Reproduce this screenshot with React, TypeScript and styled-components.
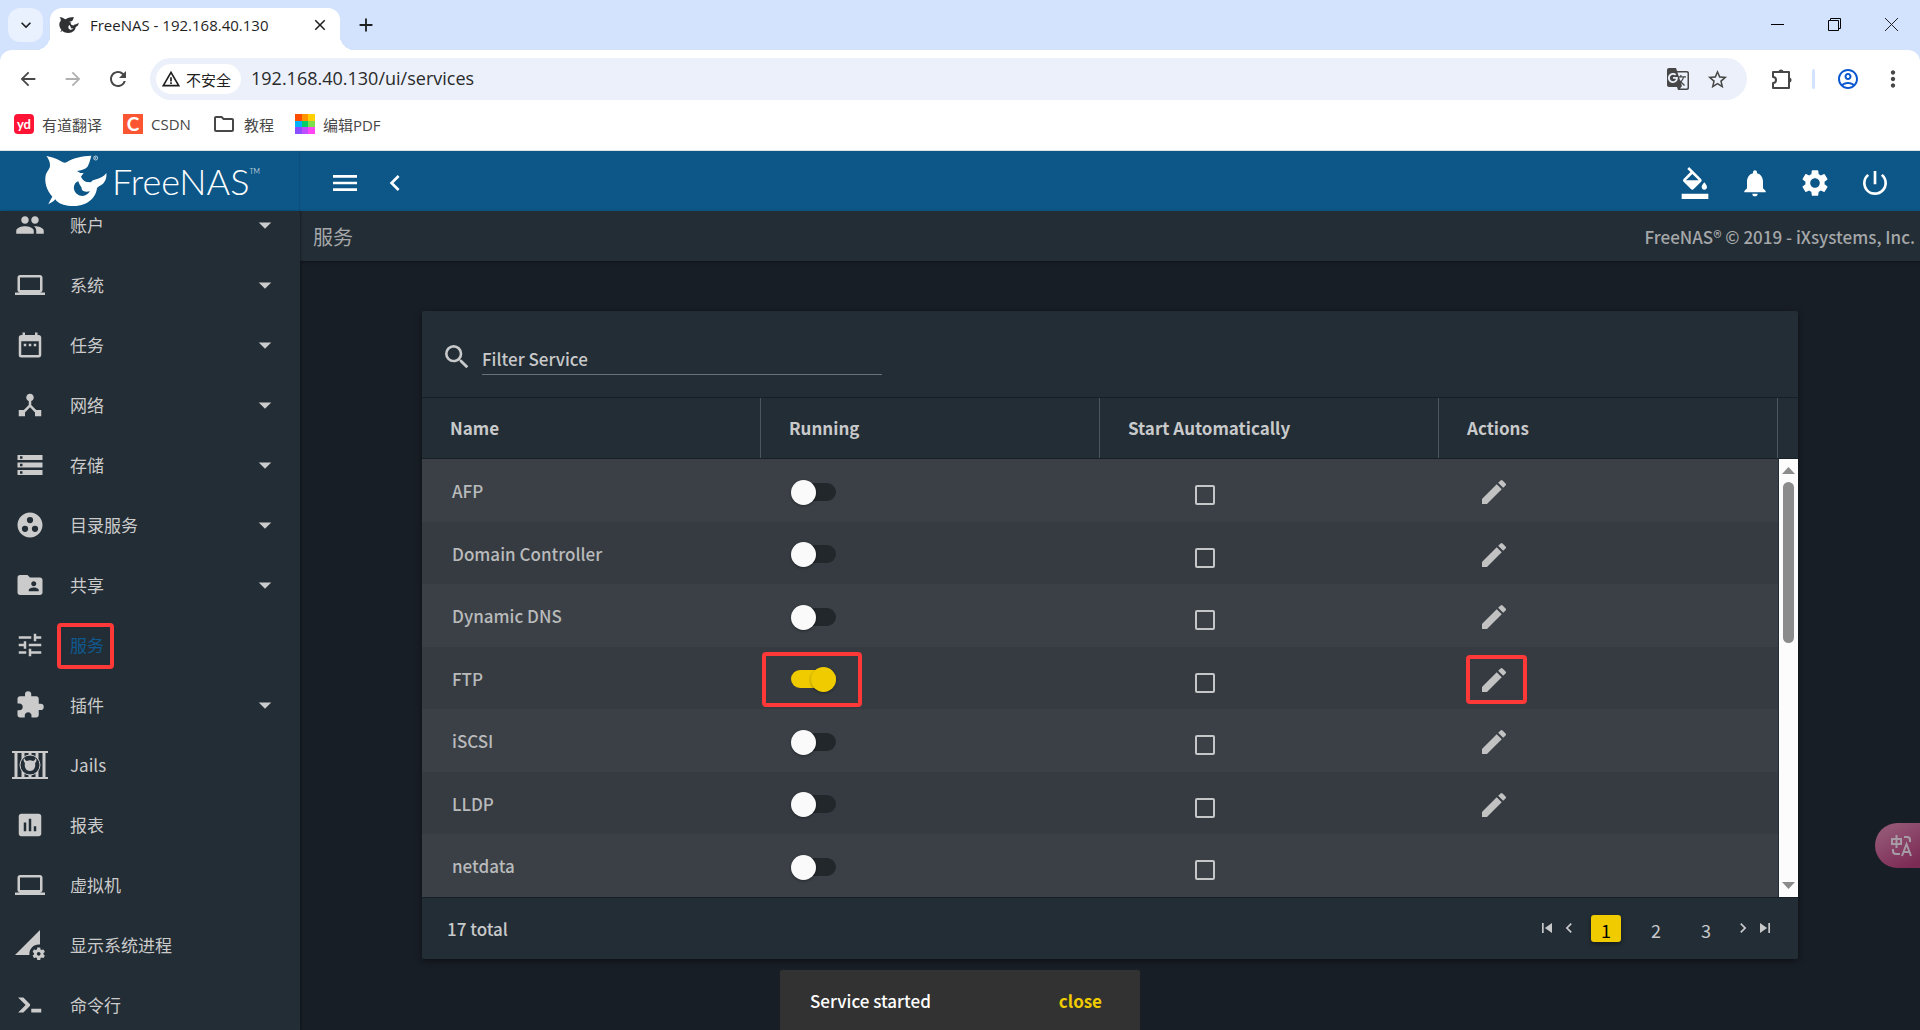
import React from "react";
import styled, { createGlobalStyle } from "styled-components";
import {
  MdAdd,
  MdArrowBack,
  MdArrowDropDown,
  MdArrowForward,
  MdAssessment,
  MdChevronLeft,
  MdChevronRight,
  MdClose,
  MdDateRange,
  MdDeviceHub,
  MdEdit,
  MdExpandMore,
  MdExtension,
  MdFolderShared,
  MdFormatColorFill,
  MdGTranslate,
  MdGroupWork,
  MdLaptop,
  MdMenu,
  MdMoreVert,
  MdNotifications,
  MdOutlineAccountCircle,
  MdOutlineFolder,
  MdPeople,
  MdPermDataSetting,
  MdPowerSettingsNew,
  MdRefresh,
  MdSearch,
  MdSettings,
  MdSkipNext,
  MdSkipPrevious,
  MdStarBorder,
  MdStorage,
  MdTune,
  MdWarningAmber,
} from "react-icons/md";

const appFont = `"Noto Sans CJK SC", "Noto Sans", sans-serif`;
const chromeFont = `"Open Sans", "Noto Sans CJK SC", sans-serif`;

const color = {
  panel: "#232d35",
  page: "#181e26",
  primary: "#0d5788",
  accent: "#f0cb00",
  text: "#c8c9ca",
  line: "#182027",
  mark: "#ff3838",
};

const GlobalStyle = createGlobalStyle`
  *, *::before, *::after { box-sizing: border-box; }
  body { margin: 0; overflow: hidden; background: ${color.page}; }
  button, input { font: inherit; color: inherit; }
  button { padding: 0; border: 0; background: none; cursor: pointer; }
  a { color: inherit; text-decoration: none; }
`;

const Page = styled.div`
  display: flex;
  flex-direction: column;
  height: 100vh;
  font-family: ${appFont};
`;

/* ---------- browser window ---------- */

const Chrome = styled.header`
  flex: none;
  background: #d3e2fd;
  border-bottom: 1px solid #dfe3e3;
  color: #1f1f1f;
  font-family: ${chromeFont};
`;

const TabStrip = styled.div`
  display: flex;
  height: 50px;
  padding: 8px 0 0 8px;
`;

const TabSearch = styled.button`
  display: grid;
  place-items: center;
  width: 35px;
  height: 34px;
  margin-right: 7px;
  border-radius: 12px;
  background: #e9f0fe;
`;

const Tab = styled.div`
  position: relative;
  display: flex;
  align-items: center;
  width: 290px;
  padding: 0 11px 8px 9px;
  border-radius: 12px 12px 0 0;
  background: #fff;
  font-size: 15px;
  line-height: 20px;

  &::before,
  &::after {
    content: "";
    position: absolute;
    bottom: 0;
    width: 14px;
    height: 14px;
  }
  &::before {
    right: 100%;
    background: radial-gradient(circle at 0 0, transparent 14px, #fff 14px);
  }
  &::after {
    left: 100%;
    background: radial-gradient(circle at 100% 0, transparent 14px, #fff 14px);
  }
`;

const TabTitle = styled.span`
  flex: 1;
  margin-left: 11px;
  white-space: nowrap;
`;

const PlainButton = styled.button`
  display: grid;
  place-items: center;
`;

const NewTab = styled(PlainButton)`
  width: 34px;
  height: 34px;
  margin-left: 9px;
`;

const WindowControls = styled.div`
  display: flex;
  margin: -8px 0 0 auto;
`;

const WindowButton = styled(PlainButton)`
  width: 57px;
  height: 48px;
`;

const Toolbar = styled.div`
  display: flex;
  align-items: center;
  height: 50px;
  padding: 8px 5px 0;
  border-radius: 12px 12px 0 0;
  background: #fff;
`;

const ToolButton = styled(PlainButton)<{ $tone?: string }>`
  width: 45px;
  height: 42px;
  color: ${(p) => p.$tone ?? "#474747"};
`;

const Omnibox = styled.div`
  display: flex;
  flex: 1;
  align-items: center;
  height: 42px;
  margin: 0 12px 0 10px;
  padding: 0 18px 0 6px;
  border-radius: 21px;
  background: #ebf0fa;
  color: #474747;
`;

const SecurityChip = styled.button`
  display: flex;
  align-items: center;
  gap: 5px;
  height: 30px;
  padding: 0 10px 0 5px;
  border-radius: 15px;
  background: #fff;
  color: #1f1f1f;
  font-size: 15px;
`;

const AddressInput = styled.input`
  flex: 1;
  min-width: 0;
  margin-left: 10px;
  padding: 0 0 2px;
  border: 0;
  outline: 0;
  background: none;
  color: #2a2a2a;
  font-size: 18px;
`;

const OmniboxActions = styled.div`
  display: flex;
  gap: 16px;
`;

const Divider = styled.span`
  width: 3px;
  height: 20px;
  margin: 0 10px 0 8px;
  border-radius: 2px;
  background: #d3e3fd;
`;

const Bookmarks = styled.nav`
  display: flex;
  align-items: center;
  gap: 21px;
  height: 50px;
  padding: 0 14px 2px;
  background: #fff;
  color: #474747;
  font-size: 15px;
`;

const Bookmark = styled.a`
  display: flex;
  align-items: center;
  gap: 8px;
  white-space: nowrap;
`;

const Badge = styled.span<{ $bg: string; $radius: number; $size: number }>`
  display: grid;
  place-items: center;
  width: 20px;
  height: 20px;
  border-radius: ${(p) => p.$radius}px;
  background: ${(p) => p.$bg};
  color: #fff;
  font: 700 ${(p) => p.$size}px/18px Lato, sans-serif;
`;

/* ---------- application ---------- */

const TopBar = styled.header`
  display: flex;
  flex: none;
  height: 60px;
  background: ${color.primary};
  color: #fff;
`;

const Brand = styled.a`
  display: flex;
  align-items: center;
  gap: 1px;
  width: 300px;
  padding-left: 41px;
  border-right: 1px solid #0b4f7c;
`;

const WordMark = styled.span`
  display: flex;
  align-items: flex-start;
  font: 300 36px/60px Lato, sans-serif;

  sup {
    margin-top: 15px;
    font-size: 7px;
    line-height: 10px;
  }
`;

const TopBarGroup = styled.div<{ $end?: boolean }>`
  display: flex;
  align-items: center;
  margin-left: ${(p) => (p.$end ? "auto" : "20px")};
  padding-right: ${(p) => (p.$end ? "15px" : "0")};
`;

const TopBarButton = styled(PlainButton)<{ $width?: number }>`
  width: ${(p) => p.$width ?? 60}px;
  height: 60px;
  padding-top: 4px;
`;

const Body = styled.div`
  display: flex;
  flex: 1;
  min-height: 0;
`;

const Sidebar = styled.nav`
  flex: none;
  width: 300px;
  overflow: hidden;
  background: ${color.panel};
  box-shadow: 1px 0 2px rgba(0, 0, 0, 0.35);
  color: #cbcbcb;
  z-index: 1;
`;

/* The menu is scrolled slightly past its first entry. */
const NavList = styled.ul`
  margin: -16px 0 0;
  padding: 0;
  list-style: none;
`;

const NavItem = styled.a`
  display: flex;
  align-items: center;
  width: 100%;
  height: 60px;
  padding: 0 20px 0 12px;
  cursor: pointer;
`;

const NavIcon = styled.span`
  display: grid;
  place-items: center;
  width: 36px;
  margin-right: 22px;
`;

const NavLabel = styled.span<{ $active?: boolean }>`
  position: relative;
  margin-right: auto;
  color: ${(p) => (p.$active ? "#0f598f" : "inherit")};
  font-size: 17px;
  line-height: 24px;
`;

const Highlight = styled.span<{ $inset: string }>`
  position: absolute;
  inset: ${(p) => p.$inset};
  border: 4px solid ${color.mark};
  border-radius: 4px;
  pointer-events: none;
`;

const Main = styled.main`
  display: flex;
  flex: 1;
  flex-direction: column;
  min-width: 0;
`;

const Breadcrumb = styled.div`
  display: flex;
  align-items: center;
  justify-content: space-between;
  height: 50px;
  padding: 0 5px 0 13px;
  background: ${color.panel};
  box-shadow: 0 1px 3px rgba(0, 0, 0, 0.4);
  color: #a5a7a9;
  font-size: 17px;
  font-weight: 500;
`;

const Crumb = styled.h1`
  margin: 0;
  font-size: 20px;
  font-weight: 400;
`;

const Card = styled.section`
  margin: 50px 122px 0;
  border-radius: 2px;
  background: ${color.panel};
  box-shadow: 0 2px 6px rgba(0, 0, 0, 0.45);
  color: ${color.text};
  font-size: 17px;
  font-weight: 500;
`;

const FilterBar = styled.label`
  display: flex;
  align-items: center;
  gap: 9px;
  height: 86px;
  padding: 6px 19px 0;
`;

const FilterInput = styled.input`
  width: 400px;
  height: 36px;
  padding: 3px 0 0;
  border: 0;
  border-bottom: 1px solid #69727a;
  outline: 0;
  background: none;

  &::placeholder {
    color: ${color.text};
    opacity: 1;
  }
`;

const TableArea = styled.div`
  display: flex;
  border-top: 1px solid ${color.line};
`;

const Table = styled.table`
  width: 100%;
  border-collapse: separate;
  border-spacing: 0;
  table-layout: fixed;
`;

const HeadCell = styled.th`
  height: 61px;
  padding: 0;
  border-bottom: 1px solid ${color.line};
  font-weight: 700;
  text-align: left;

  span {
    display: block;
    padding-left: 28px;
    border-right: 1px solid #4d565d;
    line-height: 60px;
  }
`;

const Row = styled.tr`
  background: #353b41;

  &:nth-child(odd) {
    background: #3a4046;
  }
  &:nth-child(odd) td {
    height: 63px;
  }
`;

const Cell = styled.td<{ $indent: number }>`
  height: 62px;
  padding: 0 0 0 ${(p) => p.$indent}px;
  color: #b9babb;
`;

const Slot = styled.div<{ $drop?: number }>`
  position: relative;
  display: flex;
  width: max-content;
  margin-top: ${(p) => p.$drop ?? 0}px;
`;

const Toggle = styled.input`
  position: relative;
  appearance: none;
  width: 45px;
  height: 25px;
  margin: 0;
  cursor: pointer;

  &::before {
    content: "";
    position: absolute;
    inset: 3px 0 4px;
    border-radius: 9px;
    background: #22272b;
  }
  &::after {
    content: "";
    position: absolute;
    top: 0;
    left: 0;
    width: 25px;
    height: 25px;
    border-radius: 50%;
    background: #fafafa;
    box-shadow: 0 1px 3px rgba(0, 0, 0, 0.35);
  }
  &:checked::before {
    background: ${color.accent};
  }
  &:checked::after {
    left: 20px;
    background: ${color.accent};
  }
`;

const CheckBox = styled.input`
  appearance: none;
  width: 20px;
  height: 20px;
  margin: 0;
  border: 2px solid #c5c6c7;
  border-radius: 2px;
`;

const EditButton = styled(PlainButton)`
  width: 32px;
  height: 32px;
  color: #c2c2c2;
`;

const Rail = styled.div`
  display: flex;
  flex: none;
  flex-direction: column;
  width: 20px;
`;

const RailHead = styled.div`
  height: 61px;
  border-bottom: 1px solid ${color.line};
`;

const RailTrack = styled.div`
  display: flex;
  flex: 1;
  flex-direction: column;
  align-items: center;
  justify-content: space-between;
  margin-left: 1px;
  padding: 8px 0;
  background: #fcfcfc;
`;

const RailThumb = styled.div`
  width: 11px;
  height: 161px;
  margin: 8px 0 auto;
  border-radius: 6px;
  background: #8b8b8b;
`;

const CardFooter = styled.footer`
  display: flex;
  align-items: center;
  justify-content: space-between;
  height: 62px;
  padding: 0 22px 1px 25px;
  border-top: 1px solid ${color.line};
`;

const Pager = styled.nav`
  display: flex;
  align-items: center;
`;

const PagerStep = styled(PlainButton)`
  width: 22px;
  height: 27px;
`;

const PageNumbers = styled.div`
  display: flex;
  gap: 20px;
  margin: 0 11px;
`;

const PageNumber = styled.button<{ $current?: boolean }>`
  width: 30px;
  height: 27px;
  padding-top: 3px;
  border-radius: 3px;
  background: ${(p) => (p.$current ? color.accent : "none")};
  box-shadow: ${(p) => (p.$current ? "0 2px 4px rgba(0, 0, 0, 0.4)" : "none")};
  color: ${(p) => (p.$current ? "#000" : "inherit")};
  font-size: 18px;
  font-weight: 400;
  line-height: 24px;
`;

const Snackbar = styled.div`
  position: fixed;
  bottom: 0;
  left: 50%;
  z-index: 2;
  display: flex;
  align-items: center;
  justify-content: space-between;
  width: 360px;
  height: 60px;
  margin-left: -180px;
  padding: 0 38px 0 30px;
  border-radius: 2px 2px 0 0;
  background: #323232;
  color: #fff;
  font-size: 17px;
  font-weight: 500;

  button {
    color: ${color.accent};
    font-weight: 700;
  }
`;

const TranslateBubble = styled.button`
  position: fixed;
  right: 0;
  bottom: 162px;
  z-index: 2;
  display: flex;
  align-items: center;
  width: 45px;
  height: 45px;
  padding-left: 15px;
  border-radius: 23px 0 0 23px;
  background: linear-gradient(150deg, #935574 20%, #7c2b55 90%);
  color: #a79ba6;
`;

/* ---------- drawings ---------- */

const sharkBody =
  "M16 18C28 20 46 25 60 34C66 38 72 40 78 36C98 22 124 19 151 17C147 32 144 42 139 51C130 60 120 61 108 63L118 69L128 69C124 74 122 77 120 80C124 89 130 94 138 96L150 97C153 92 156 90 161 89C178 86 190 78 196 69C198 84 192 96 184 103C178 108 172 109 168 114C166 138 144 168 98 168C74 168 58 163 46 152L43 148C38 155 30 158 22 163C25 155 29 149 34 140C16 120 10 96 14 76C17 64 26 58 27 48C28 36 22 26 16 18Z";
const sharkHole =
  "M112 94C101 97 98 108 99 118C103 132 114 138 124 138C134 138 142 132 147 124C136 127 124 125 122 118C124 112 116 108 112 94Z";

function Shark({ width, height }: { width: number; height: number }) {
  return (
    <svg width={width} height={height} viewBox="0 3 210 180" aria-hidden="true">
      <path d={sharkBody + sharkHole} fill="currentColor" fillRule="evenodd" />
      <circle cx="164" cy="24" r="6" fill="none" stroke="currentColor" strokeWidth="2" />
      <path d="M162 27v-6h3v3h-3l4 3" fill="none" stroke="currentColor" strokeWidth="1" />
    </svg>
  );
}

function FavIcon() {
  return (
    <svg width="20" height="18" viewBox="10 14 190 158" aria-hidden="true">
      <path d={sharkBody + sharkHole} fill="#2f3133" fillRule="evenodd" />
    </svg>
  );
}

function JailIcon() {
  return (
    <svg width="36" height="30" viewBox="0 0 36 30" fill="none" stroke="currentColor">
      <path d="M0 2h36M0 28h36" strokeWidth="2" />
      <path d="M4 3v24M32 3v24" strokeWidth="3" />
      <path d="M11 3v24M25 3v24M18 3v3M18 24v3" strokeWidth="3" />
      <circle cx="18" cy="15" r="10" fill={color.panel} strokeWidth="1" />
      <path
        d="M12 8c1 2 2 3 3 3 2-1 4-1 6 0 1 0 2-1 3-3 1 3 0 4-1 5 1 4-1 8-5 8s-6-4-5-8c-1-1-2-3-1-5Z"
        fill="currentColor"
        stroke="none"
      />
    </svg>
  );
}

function ConsoleIcon() {
  return (
    <svg width="30" height="30" viewBox="0 0 24 24" fill="currentColor">
      <path d="M13 19v-3h8v3h-8M8.500 13 2.470 7h4.240l4.960 4.960c.58.580.58 1.540 0 2.120L6.740 19H2.500l6-6Z" transform="translate(0 -1)" />
    </svg>
  );
}

function PuzzleIcon() {
  return (
    <svg width="24" height="24" viewBox="0 0 24 24" fill="none" stroke="currentColor" strokeWidth="2">
      <path d="M3 5h16v16H3v-5a3 3 0 0 0 0-6Z" strokeLinejoin="round" />
      <path d="M8.500 5a2.500 2.500 0 0 1 5 0ZM19 10.500a2.500 2.500 0 0 1 0 5Z" fill="currentColor" stroke="none" />
    </svg>
  );
}

function PdfGrid() {
  const cells = ["#ff4d00", "#ff9400", "#ffd000", "#00b2ff", "#00d068", "#7be04a", "#8a4dff", "#c04dff", "#ff46f2"];
  return (
    <svg width="20" height="20" viewBox="0 0 21 21" shapeRendering="crispEdges" aria-hidden="true">
      {cells.map((fill, i) => (
        <rect key={fill} x={(i % 3) * 7} y={Math.floor(i / 3) * 7} width="7" height="7" fill={fill} />
      ))}
    </svg>
  );
}

function TranslateIcon() {
  return (
    <svg width="24" height="24" viewBox="0 0 24 24" fill="none" stroke="currentColor" strokeWidth="2">
      <path d="M2 5h9v5H2zM6.500 1v13" />
      <path d="M14 3h3a3 3 0 0 1 3 3v2M3 15v2a3 3 0 0 0 3 3h4" />
      <path d="M12 22l4.500-12 4.500 12M13.500 18h6" />
    </svg>
  );
}

function Arrow({ down }: { down?: boolean }) {
  return (
    <svg width="13" height="7" viewBox="0 0 13 7" fill="#8b8b8b" aria-hidden="true">
      <path d={down ? "M0 0h13L6.500 7Z" : "M0 7h13L6.500 0Z"} />
    </svg>
  );
}

/* ---------- data ---------- */

type NavEntry = { label: string; icon: React.ReactNode; group?: boolean; active?: boolean };

const navEntries: NavEntry[] = [
  { label: "账户", icon: <MdPeople size={30} />, group: true },
  { label: "系统", icon: <MdLaptop size={30} />, group: true },
  { label: "任务", icon: <MdDateRange size={30} />, group: true },
  { label: "网络", icon: <MdDeviceHub size={30} />, group: true },
  { label: "存储", icon: <MdStorage size={30} />, group: true },
  { label: "目录服务", icon: <MdGroupWork size={30} />, group: true },
  { label: "共享", icon: <MdFolderShared size={30} />, group: true },
  { label: "服务", icon: <MdTune size={30} />, active: true },
  { label: "插件", icon: <MdExtension size={30} />, group: true },
  { label: "Jails", icon: <JailIcon /> },
  { label: "报表", icon: <MdAssessment size={30} /> },
  { label: "虚拟机", icon: <MdLaptop size={30} /> },
  { label: "显示系统进程", icon: <MdPermDataSetting size={30} /> },
  { label: "命令行", icon: <ConsoleIcon /> },
];

const services = [
  { name: "AFP", running: false, editable: true },
  { name: "Domain Controller", running: false, editable: true },
  { name: "Dynamic DNS", running: false, editable: true },
  { name: "FTP", running: true, editable: true },
  { name: "iSCSI", running: false, editable: true },
  { name: "LLDP", running: false, editable: true },
  { name: "netdata", running: false, editable: false },
];

const columns = ["Name", "Running", "Start Automatically", "Actions"];

/* ---------- sections ---------- */

function BrowserChrome() {
  return (
    <Chrome>
      <TabStrip>
        <TabSearch aria-label="Search tabs">
          <MdExpandMore size={20} />
        </TabSearch>
        <Tab>
          <FavIcon />
          <TabTitle>FreeNAS - 192.168.40.130</TabTitle>
          <PlainButton aria-label="Close tab">
            <MdClose size={18} />
          </PlainButton>
        </Tab>
        <NewTab aria-label="New tab">
          <MdAdd size={22} />
        </NewTab>
        <WindowControls>
          <WindowButton aria-label="Minimize">
            <svg width="13" height="13" stroke="#000">
              <path d="M0 6.500h13" />
            </svg>
          </WindowButton>
          <WindowButton aria-label="Restore">
            <svg width="13" height="13" fill="none" stroke="#000">
              <path d="M.5 2.500h10v10H.5zM2.500 2.500v-2h10v10h-2" />
            </svg>
          </WindowButton>
          <WindowButton aria-label="Close">
            <svg width="13" height="13" stroke="#222">
              <path d="M0 0l13 13M13 0L0 13" />
            </svg>
          </WindowButton>
        </WindowControls>
      </TabStrip>
      <Toolbar>
        <ToolButton aria-label="Back">
          <MdArrowBack size={22} />
        </ToolButton>
        <ToolButton aria-label="Forward" $tone="#b0b0b0">
          <MdArrowForward size={22} />
        </ToolButton>
        <ToolButton aria-label="Reload">
          <MdRefresh size={24} />
        </ToolButton>
        <Omnibox>
          <SecurityChip>
            <MdWarningAmber size={20} />
            不安全
          </SecurityChip>
          <AddressInput aria-label="Address" defaultValue="192.168.40.130/ui/services" />
          <OmniboxActions>
            <PlainButton aria-label="Translate">
              <MdGTranslate size={24} />
            </PlainButton>
            <PlainButton aria-label="Bookmark this tab">
              <MdStarBorder size={23} />
            </PlainButton>
          </OmniboxActions>
        </Omnibox>
        <ToolButton aria-label="Extensions">
          <PuzzleIcon />
        </ToolButton>
        <Divider />
        <ToolButton aria-label="Profile" $tone="#0b57d0">
          <MdOutlineAccountCircle size={24} />
        </ToolButton>
        <ToolButton aria-label="Menu">
          <MdMoreVert size={26} />
        </ToolButton>
      </Toolbar>
      <Bookmarks>
        <Bookmark href="#youdao">
          <Badge $bg="#ff1436" $radius={4} $size={13}>
            yd
          </Badge>
          有道翻译
        </Bookmark>
        <Bookmark href="#csdn">
          <Badge $bg="#fc5531" $radius={0} $size={19}>
            C
          </Badge>
          CSDN
        </Bookmark>
        <Bookmark href="#tutorials">
          <MdOutlineFolder size={24} />
          教程
        </Bookmark>
        <Bookmark href="#pdf">
          <PdfGrid />
          编辑PDF
        </Bookmark>
      </Bookmarks>
    </Chrome>
  );
}

function Navigation() {
  return (
    <Sidebar>
      <NavList>
        {navEntries.map((entry) => (
          <li key={entry.label}>
            <NavItem href={"#" + entry.label}>
              <NavIcon>{entry.icon}</NavIcon>
              <NavLabel $active={entry.active}>
                {entry.label}
                {entry.active && <Highlight $inset="-10px -10px -12px -13px" />}
              </NavLabel>
              {entry.group && <MdArrowDropDown size={30} />}
            </NavItem>
          </li>
        ))}
      </NavList>
    </Sidebar>
  );
}

function ServiceTable() {
  return (
    <TableArea>
      <Table>
        <thead>
          <tr>
            {columns.map((title) => (
              <HeadCell key={title} scope="col">
                <span>{title}</span>
              </HeadCell>
            ))}
          </tr>
        </thead>
        <tbody>
          {services.map((service) => (
            <Row key={service.name}>
              <Cell $indent={30}>{service.name}</Cell>
              <Cell $indent={30}>
                <Slot $drop={3}>
                  <Toggle
                    type="checkbox"
                    role="switch"
                    aria-label={service.name + " running"}
                    defaultChecked={service.running}
                  />
                  {service.running && <Highlight $inset="-15px -26px -15px -29px" />}
                </Slot>
              </Cell>
              <Cell $indent={95}>
                <Slot $drop={9}>
                  <CheckBox type="checkbox" aria-label={"Start " + service.name + " automatically"} />
                </Slot>
              </Cell>
              <Cell $indent={39}>
                {service.editable && (
                  <Slot $drop={3}>
                    <EditButton aria-label={"Configure " + service.name}>
                      <MdEdit size={32} />
                    </EditButton>
                    {service.running && <Highlight $inset="-9px -17px -8px -12px" />}
                  </Slot>
                )}
              </Cell>
            </Row>
          ))}
        </tbody>
      </Table>
      <Rail aria-hidden="true">
        <RailHead />
        <RailTrack>
          <Arrow />
          <RailThumb />
          <Arrow down />
        </RailTrack>
      </Rail>
    </TableArea>
  );
}

export default function App() {
  return (
    <Page>
      <GlobalStyle />
      <BrowserChrome />
      <TopBar>
        <Brand href="#dashboard">
          <Shark width={70} height={60} />
          <WordMark>
            FreeNAS<sup>TM</sup>
          </WordMark>
        </Brand>
        <TopBarGroup>
          <TopBarButton $width={50} aria-label="Toggle menu">
            <MdMenu size={32} />
          </TopBarButton>
          <TopBarButton $width={50} aria-label="Collapse menu">
            <MdChevronLeft size={32} />
          </TopBarButton>
        </TopBarGroup>
        <TopBarGroup $end>
          <TopBarButton aria-label="Theme">
            <MdFormatColorFill size={32} />
          </TopBarButton>
          <TopBarButton aria-label="Notifications">
            <MdNotifications size={32} />
          </TopBarButton>
          <TopBarButton aria-label="Settings">
            <MdSettings size={32} />
          </TopBarButton>
          <TopBarButton aria-label="Power">
            <MdPowerSettingsNew size={32} />
          </TopBarButton>
        </TopBarGroup>
      </TopBar>
      <Body>
        <Navigation />
        <Main>
          <Breadcrumb>
            <Crumb>服务</Crumb>
            <span>FreeNAS® © 2019 - iXsystems, Inc.</span>
          </Breadcrumb>
          <Card>
            <FilterBar>
              <MdSearch size={32} />
              <FilterInput type="text" aria-label="Filter Service" placeholder="Filter Service" />
            </FilterBar>
            <ServiceTable />
            <CardFooter>
              <span>17 total</span>
              <Pager aria-label="Pages">
                <PagerStep aria-label="First page">
                  <MdSkipPrevious size={20} />
                </PagerStep>
                <PagerStep aria-label="Previous page">
                  <MdChevronLeft size={20} />
                </PagerStep>
                <PageNumbers>
                  <PageNumber $current>1</PageNumber>
                  <PageNumber>2</PageNumber>
                  <PageNumber>3</PageNumber>
                </PageNumbers>
                <PagerStep aria-label="Next page">
                  <MdChevronRight size={20} />
                </PagerStep>
                <PagerStep aria-label="Last page">
                  <MdSkipNext size={20} />
                </PagerStep>
              </Pager>
            </CardFooter>
          </Card>
        </Main>
      </Body>
      <Snackbar role="status">
        Service started
        <button>close</button>
      </Snackbar>
      <TranslateBubble aria-label="Translate page">
        <TranslateIcon />
      </TranslateBubble>
    </Page>
  );
}
